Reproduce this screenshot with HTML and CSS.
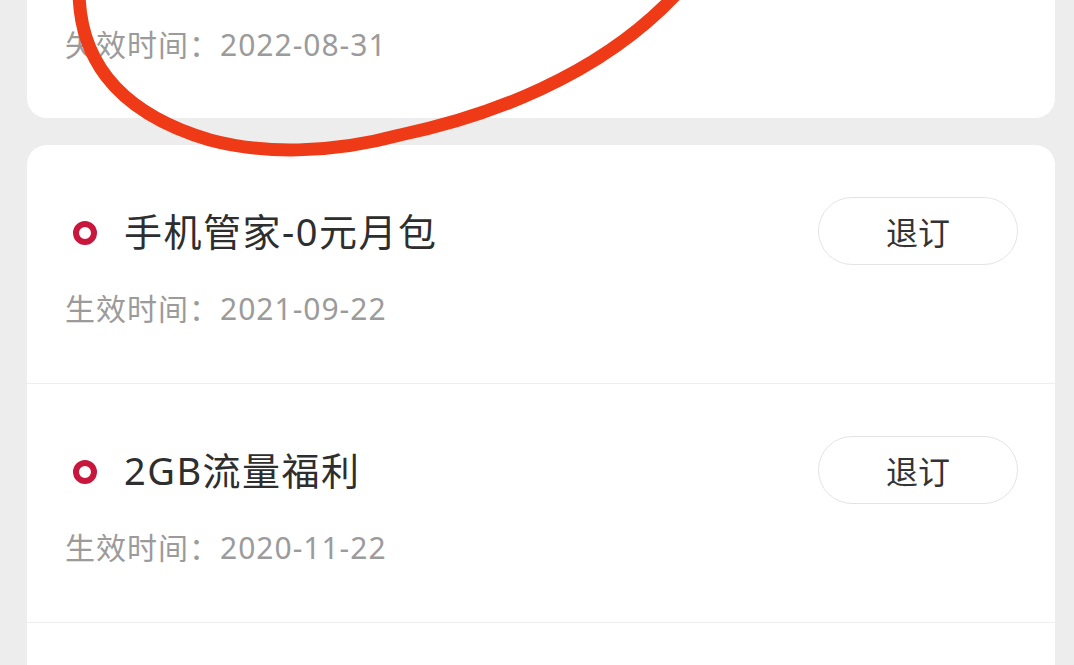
FILE: index.html
```html
<!DOCTYPE html>
<html lang="zh-CN">
<head>
<meta charset="utf-8">
<title>已订业务</title>
<link rel="stylesheet" href="styles.css">
</head>
<body>
<div class="page">
  <section class="card card-top">
    <div class="item item-tail">
      <p class="date">失效时间：2022-08-31</p>
    </div>
  </section>
  <section class="card">
    <div class="item">
      <div class="item-head">
        <span class="dot"></span>
        <span class="name">手机管家-0元月包</span>
        <button class="btn">退订</button>
      </div>
      <p class="date">生效时间：2021-09-22</p>
    </div>
    <div class="item">
      <div class="item-head">
        <span class="dot"></span>
        <span class="name">2GB流量福利</span>
        <button class="btn">退订</button>
      </div>
      <p class="date">生效时间：2020-11-22</p>
    </div>
    <div class="item item-more"></div>
  </section>
</div>
<svg class="mark" viewBox="0 0 1074 665" width="1074" height="665" aria-hidden="true">
  <path d="M79 -10 C79 50, 108 110, 210 140 C262 154, 330 154, 400 135 C482 118, 600 78, 680 -10" fill="none" stroke="#ef3a18" stroke-width="13" stroke-linecap="round"/>
</svg>
</body>
</html>
```
FILE: styles.css
```css
html, body {
  margin: 0;
  padding: 0;
  height: 665px;
  overflow: hidden;
  background: #ededed;
  font-family: "Noto Sans", "Noto Sans CJK SC", sans-serif;
}

.page {
  display: flex;
  flex-direction: column;
  gap: 27px;
  padding: 0 19px 0 27px;
}

.card {
  background: #ffffff;
  border-radius: 20px;
  overflow: hidden;
}

.card-top {
  border-radius: 0 0 20px 20px;
}

.item {
  padding: 52px 37px 54px 38px;
  border-bottom: 1px solid #eeeeee;
}

.item-tail {
  padding: 25px 37px 53px 38px;
  border-bottom: none;
}

.item-more {
  height: 80px;
  padding: 0;
  border-bottom: none;
}

.item-head {
  display: flex;
  align-items: center;
  height: 68px;
}

.dot {
  box-sizing: border-box;
  width: 24px;
  height: 24px;
  border: 6px solid #c8173d;
  border-radius: 50%;
  margin-left: 8px;
  margin-top: 3px;
  flex: none;
}

.name {
  margin-left: 27px;
  font-size: 38px;
  line-height: 50px;
  letter-spacing: 1.5px;
  color: #2e2e2e;
}

.btn {
  margin-left: auto;
  width: 200px;
  height: 68px;
  border: 1.5px solid #e4e4e4;
  border-radius: 34px;
  background: #ffffff;
  font-family: "Noto Sans", "Noto Sans CJK SC", sans-serif;
  font-size: 32px;
  color: #333333;
  padding: 0;
}

.date {
  margin: 24px 0 0;
  font-size: 30px;
  line-height: 40px;
  letter-spacing: 1px;
  color: #9b9b9b;
}

.item-tail .date {
  margin-top: 0;
}

.mark {
  position: absolute;
  top: 0;
  left: 0;
  pointer-events: none;
}
```
